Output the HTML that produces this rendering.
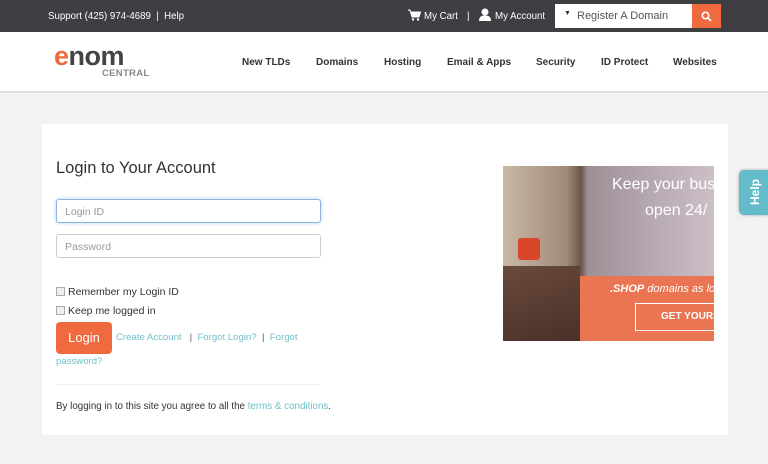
<!DOCTYPE html>
<html><head><meta charset="utf-8"><style>
*{box-sizing:border-box;margin:0;padding:0}
body{width:768px;height:464px;overflow:hidden;background:#f2f2f2;font-family:"Liberation Sans",Arial,sans-serif;position:relative}
.top{position:absolute;left:0;top:0;width:768px;height:32px;background:#3e3e43;color:#fff;font-size:9.7px}
.top span{position:absolute;top:11px}
.search{position:absolute;left:555px;top:4px;width:137px;height:24px;background:#fff;color:#555;font-size:11px}
.sbtn{position:absolute;left:692px;top:4px;width:29px;height:24px;background:#ef6a3e}
.nav{position:absolute;left:0;top:32px;width:768px;height:61px;background:#fff;border-bottom:2px solid #ddd}
.nav a{position:absolute;top:25px;font-size:10px;color:#333;font-weight:bold}
.card{position:absolute;left:42px;top:124px;width:686px;height:311px;background:#fff}
.inp{position:absolute;left:56px;width:265px;height:24px;border:1px solid #ccc;border-radius:3px;font-size:10.5px;color:#999;padding:6px 8px}
.cb{position:absolute;left:56px;width:9px;height:9px;border:1px solid #aaa;background:#eee}
.lnk{color:#6fc0cc}
</style></head><body>
<div class="top">
<span style="left:48px">Support (425) 974-4689 &nbsp;| &nbsp;Help</span>
<svg style="position:absolute;left:408px;top:9px" width="13" height="12" viewBox="0 0 13 12"><path d="M0 1h2l2 7h7l1.5-5H3" fill="#fff" stroke="#fff" stroke-width="1"/><circle cx="5" cy="10.5" r="1.2" fill="#fff"/><circle cx="10" cy="10.5" r="1.2" fill="#fff"/></svg>
<span style="left:424px">My Cart</span>
<span style="left:467px">|</span>
<svg style="position:absolute;left:479px;top:8px" width="12" height="13" viewBox="0 0 12 13"><circle cx="6" cy="4" r="3.5" fill="#fff"/><path d="M0 13c0-4 2-5.5 6-5.5s6 1.5 6 5.5z" fill="#fff"/></svg>
<span style="left:495px">My Account</span>
<div class="search"><span style="position:absolute;left:9px;top:6px;font-size:7px;color:#333">▼</span><span style="position:absolute;left:22px;top:6px">Register A Domain</span></div>
<div class="sbtn"><svg style="position:absolute;left:9px;top:7px" width="11" height="11" viewBox="0 0 11 11"><circle cx="4.5" cy="4.5" r="3.2" fill="none" stroke="#fff" stroke-width="1.6"/><path d="M7 7l3 3" stroke="#fff" stroke-width="1.8"/></svg></div>
</div>
<div class="nav">
<div style="position:absolute;left:54px;top:9px;font-size:27px;font-weight:bold;letter-spacing:-0.5px;color:#444"><span style="color:#ee6a3f">e</span>nom</div>
<div style="position:absolute;left:102px;top:36px;font-size:9.5px;font-weight:bold;color:#888;letter-spacing:0.3px">CENTRAL</div>
<a style="left:242px">New TLDs</a><a style="left:316px">Domains</a><a style="left:384px">Hosting</a><a style="left:447px">Email &amp; Apps</a><a style="left:536px">Security</a><a style="left:601px">ID Protect</a><a style="left:673px">Websites</a>
</div>
<div class="card"></div>
<div style="position:absolute;left:56px;top:159px;font-size:16.5px;color:#333">Login to Your Account</div>
<div class="inp" style="top:199px;border-color:#8fb3e0;box-shadow:0 0 4px #b6d0f0">Login ID</div>
<div class="inp" style="top:234px">Password</div>
<div class="cb" style="top:287px"></div><div style="position:absolute;left:68px;top:286px;font-size:10.5px;color:#333">Remember my Login ID</div>
<div class="cb" style="top:306px"></div><div style="position:absolute;left:68px;top:305px;font-size:10.5px;color:#333">Keep me logged in</div>
<div style="position:absolute;left:56px;top:322px;width:56px;height:32px;background:#ef6a3e;border-radius:4px;color:#fff;font-size:13px;text-align:center;line-height:32px">Login</div>
<div style="position:absolute;left:116px;top:332px;font-size:9.6px;color:#555"><span class="lnk">Create Account</span> &nbsp; | &nbsp;<span class="lnk">Forgot Login?</span> &nbsp;| &nbsp;<span class="lnk">Forgot</span></div>
<div class="lnk" style="position:absolute;left:56px;top:356px;font-size:9.6px">password?</div>
<div style="position:absolute;left:56px;top:384px;width:264px;height:1px;background:#eee"></div>
<div style="position:absolute;left:56px;top:401px;font-size:9.8px;color:#333">By logging in to this site you agree to all the <span class="lnk">terms &amp; conditions</span>.</div>
<div style="position:absolute;left:503px;top:166px;width:211px;height:175px;overflow:hidden;background:linear-gradient(90deg,#c9b9a6 0,#a08a78 30%,#6b5548 37%,#9c8f95 40%,#b6a8b3 70%,#ccbfc6 100%)">
<div style="position:absolute;left:0;top:100px;width:77px;height:75px;background:linear-gradient(160deg,#6a4a3c,#4a3028)"></div>
<div style="position:absolute;left:15px;top:72px;width:22px;height:22px;background:#d9462a;border-radius:3px"></div>
<div style="position:absolute;left:77px;top:110px;width:134px;height:65px;background:#eb7552"></div>
<div style="position:absolute;left:109px;top:10px;color:#fff;font-size:16px;white-space:nowrap">Keep your bus</div>
<div style="position:absolute;left:142px;top:36px;color:#fff;font-size:16px">open 24/</div>
<div style="position:absolute;left:107px;top:117px;color:#fff;font-size:11px;font-style:italic;white-space:nowrap"><b>.SHOP</b> domains as low</div>
<div style="position:absolute;left:132px;top:137px;width:90px;height:28px;border:1.5px solid #fff;color:#fff;font-size:10px;font-weight:bold;padding:7px 0 0 25px">GET YOURS</div>
</div>
<div style="position:absolute;left:739px;top:170px;width:35px;height:45px;background:#63bcc8;border-radius:5px;box-shadow:0 0 3px #aaa"><div style="position:absolute;left:16px;top:22px;transform:translate(-50%,-50%) rotate(-90deg);color:#fff;font-size:12px;font-weight:bold;white-space:nowrap">Help</div></div>
</body></html>
